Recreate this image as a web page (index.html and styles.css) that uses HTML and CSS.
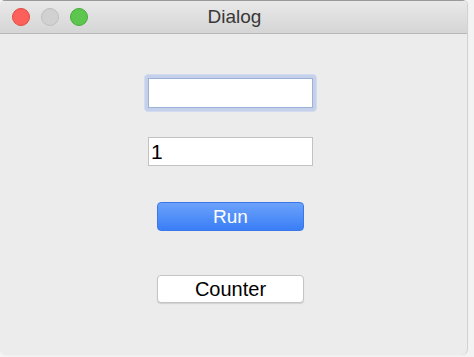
FILE: index.html
```html
<!DOCTYPE html>
<html lang="en">
<head>
  <meta charset="UTF-8">
  <title>Dialog</title>
  <link rel="stylesheet" href="styles.css">
</head>
<body>
  <div class="window">
    <!-- Title bar -->
    <div class="titlebar">
      <div class="lights">
        <span class="light red"></span>
        <span class="light grey"></span>
        <span class="light green"></span>
      </div>
      <div class="title">Dialog</div>
    </div>

    <!-- Form -->
    <div class="content">
      <div class="focus-ring">
        <input class="field" type="text" value="">
      </div>
      <input class="field plain" type="text" value="1">
      <button class="btn primary">Run</button>
      <button class="btn counter">Counter</button>
    </div>
  </div>
</body>
</html>
```

FILE: styles.css
```css
html, body {
  margin: 0;
  height: 100%;
}
body {
  background-color: #f3f3f3;
  font-family: "Liberation Sans", Arial, sans-serif;
  overflow: hidden;
}

.window {
  width: 467px;
  height: 355px;
  background-color: #ececec;
  border-radius: 5px 5px 6px 6px;
  overflow: hidden;
  display: flex;
  flex-direction: column;
  box-shadow: 1px 0 1px rgba(0, 0, 0, 0.15);
}

/* Title bar */
.titlebar {
  height: 32px;
  border-top: 1px solid #9a9a9a;
  border-bottom: 1px solid #b9b9b9;
  background: linear-gradient(#e9e9e9, #d5d5d5);
  display: flex;
  align-items: center;
  position: relative;
}
.lights {
  display: flex;
  gap: 11px;
  margin-left: 12px;
}
.light {
  width: 16px;
  height: 16px;
  border-radius: 50%;
  border: 1px solid;
}
.light.red {
  background-color: #fb615a;
  border-color: #e2493f;
}
.light.grey {
  background-color: #d1d1d1;
  border-color: #bfbfbf;
}
.light.green {
  background-color: #5cc64e;
  border-color: #47ad3b;
}
.title {
  position: absolute;
  left: 0;
  right: 0;
  text-align: center;
  font-size: 19px;
  color: #383838;
  padding-left: 2px;
}

/* Content */
.content {
  flex: 1;
  display: flex;
  flex-direction: column;
  align-items: center;
  padding-top: 40px;
  padding-right: 6px;
}
.focus-ring {
  padding: 3px;
  border-radius: 4px;
  background-color: #c5d1ea;
  border: 1px solid #d3dbee;
}
.field {
  box-sizing: border-box;
  width: 165px;
  height: 30px;
  margin: 0;
  border: 1px solid #9cb1d8;
  background-color: #ffffff;
  font-family: "Liberation Sans", Arial, sans-serif;
  font-size: 21px;
  color: #000000;
  padding: 0 2px;
  outline: none;
}
.field.plain {
  height: 29px;
  margin-top: 25px;
  border-color: #c2c2c2;
}

.btn {
  box-sizing: border-box;
  width: 147px;
  margin: 0;
  border-radius: 4px;
  font-family: "Liberation Sans", Arial, sans-serif;
  font-size: 19px;
  padding: 0;
}
.btn.primary {
  height: 29px;
  margin-top: 36px;
  border: 1px solid #3a78ea;
  background: linear-gradient(#6ba2fb, #3a7ef6);
  color: #ffffff;
}
.btn.counter {
  height: 28px;
  margin-top: 44px;
  border: 1px solid #c4c4c4;
  background-color: #ffffff;
  color: #000000;
  font-size: 20px;
  box-shadow: 0 1px 1px rgba(0, 0, 0, 0.12);
}
```
